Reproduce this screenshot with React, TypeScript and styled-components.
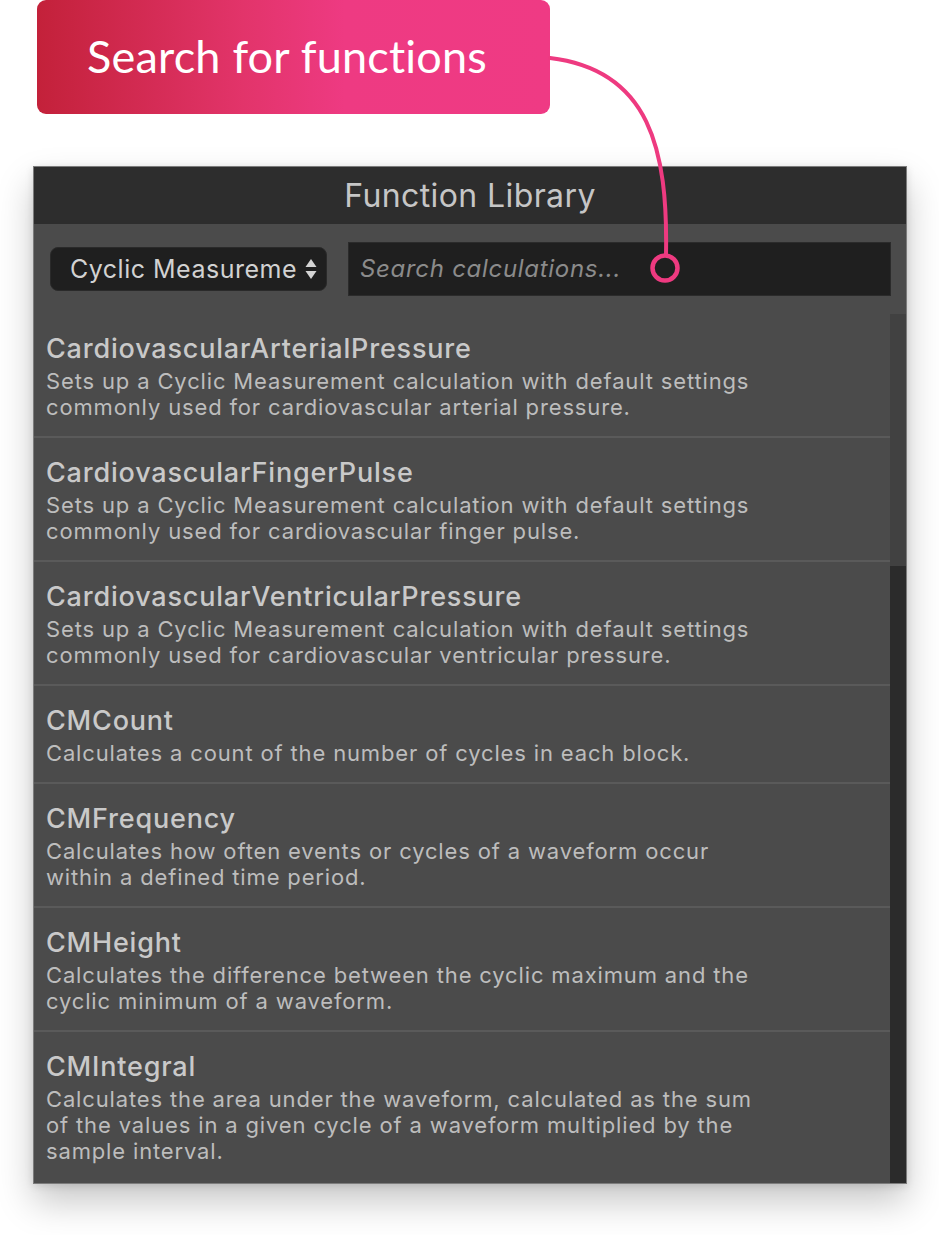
import styled, { createGlobalStyle } from "styled-components";

const GlobalStyle = createGlobalStyle`
  html, body {
    margin: 0;
    padding: 0;
    background: #ffffff;
  }
  * {
    box-sizing: border-box;
  }
`;

const functions = [
  {
    name: "CardiovascularArterialPressure",
    desc: [
      "Sets up a Cyclic Measurement calculation with default settings",
      "commonly used for cardiovascular arterial pressure.",
    ],
  },
  {
    name: "CardiovascularFingerPulse",
    desc: [
      "Sets up a Cyclic Measurement calculation with default settings",
      "commonly used for cardiovascular finger pulse.",
    ],
  },
  {
    name: "CardiovascularVentricularPressure",
    desc: [
      "Sets up a Cyclic Measurement calculation with default settings",
      "commonly used for cardiovascular ventricular pressure.",
    ],
  },
  {
    name: "CMCount",
    desc: ["Calculates a count of the number of cycles in each block."],
  },
  {
    name: "CMFrequency",
    desc: [
      "Calculates how often events or cycles of a waveform occur",
      "within a defined time period.",
    ],
  },
  {
    name: "CMHeight",
    desc: [
      "Calculates the difference between the cyclic maximum and the",
      "cyclic minimum of a waveform.",
    ],
  },
  {
    name: "CMIntegral",
    desc: [
      "Calculates the area under the waveform, calculated as the sum",
      "of the values in a given cycle of a waveform multiplied by the",
      "sample interval.",
    ],
  },
];

const Page = styled.div`
  position: relative;
  width: 939px;
  height: 1235px;
  overflow: hidden;
  padding-left: 33px;
`;

const Callout = styled.div`
  margin-left: 4px;
  width: 513px;
  height: 114px;
  border-radius: 9px;
  background: linear-gradient(90deg, #c3213a 0%, #e2346a 40%, #ee3a82 60%, #ef3a84 100%);
  display: flex;
  align-items: center;
  padding-left: 50px;
  padding-bottom: 2px;
  color: #ffffff;
  font-family: "Lato", "Noto Sans", sans-serif;
  font-size: 45px;
  letter-spacing: 0.2px;
  font-weight: 400;
`;

const Connector = styled.svg`
  position: absolute;
  left: 0;
  top: 0;
  pointer-events: none;
`;

const Panel = styled.div`
  margin-top: 52px;
  width: 874px;
  border: 1px solid #7c7c7c;
  background: #4b4b4b;
  box-shadow: 0 18px 34px rgba(0, 0, 0, 0.22), 0 2px 8px rgba(0, 0, 0, 0.12);
  font-family: "Inter", "Liberation Sans", sans-serif;
`;

const TitleBar = styled.div`
  height: 57px;
  background: #2d2d2d;
  display: flex;
  align-items: center;
  justify-content: center;
  color: #c6c6c6;
  font-size: 32px;
  letter-spacing: 0.4px;
`;

const Toolbar = styled.div`
  height: 90px;
  display: flex;
  align-items: center;
  gap: 21px;
  padding: 0 15px 1px 16px;
`;

const Select = styled.div`
  width: 277px;
  height: 44px;
  border-radius: 8px;
  background: #1f1f1f;
  border: 1px solid #2a2a2a;
  display: flex;
  align-items: center;
  justify-content: space-between;
  padding: 0 8px 0 19px;
  color: #d2d2d2;
  font-size: 25px;
  letter-spacing: 0.5px;
  white-space: nowrap;
  overflow: hidden;
`;

const SearchBox = styled.div`
  flex: 1;
  height: 54px;
  background: #1f1f1f;
  border: 1px solid #2b2b2b;
  display: flex;
  align-items: center;
  padding-left: 11px;
  color: #8b8b8b;
  font-size: 24px;
  letter-spacing: 0.7px;
  font-style: italic;
`;

const ListArea = styled.div`
  display: flex;
  height: 869px;
`;

const List = styled.div`
  flex: 1;
  display: flex;
  flex-direction: column;
`;

const Item = styled.div<{ $last?: boolean }>`
  padding: 20px 12px 16px 12px;
  border-bottom: ${(p) => (p.$last ? "none" : "2px solid #5a5a5a")};
`;

const ItemTitle = styled.div`
  font-size: 27px;
  line-height: 30px;
  font-weight: 500;
  letter-spacing: 0.8px;
  color: #c9c9c9;
  margin-bottom: 4px;
`;

const ItemDesc = styled.div`
  font-size: 22px;
  line-height: 26px;
  letter-spacing: 0.85px;
  color: #bdbdbd;
`;

const ScrollTrack = styled.div`
  width: 16px;
  background: #2b2b2b;
  display: flex;
  flex-direction: column;
`;

const ScrollThumb = styled.div`
  height: 252px;
  background: #414141;
`;

const UpDown = () => (
  <svg width="14" height="24" viewBox="0 0 14 24">
    <path d="M7 2 L12.5 10 H1.5 Z" fill="#d4d4d4" />
    <path d="M7 22 L12.5 14 H1.5 Z" fill="#d4d4d4" />
  </svg>
);

export default function App() {
  return (
    <>
      <GlobalStyle />
      <Page>
        <Callout>Search for functions</Callout>
        <Panel>
          <TitleBar>Function Library</TitleBar>
          <Toolbar>
            <Select>
              <span>Cyclic Measureme</span>
              <UpDown />
            </Select>
            <SearchBox>Search calculations...</SearchBox>
          </Toolbar>
          <ListArea>
            <List>
              {functions.map((f, i) => (
                <Item key={f.name} $last={i === functions.length - 1}>
                  <ItemTitle>{f.name}</ItemTitle>
                  {f.desc.map((line) => (
                    <ItemDesc key={line}>{line}</ItemDesc>
                  ))}
                </Item>
              ))}
            </List>
            <ScrollTrack>
              <ScrollThumb />
            </ScrollTrack>
          </ListArea>
        </Panel>
        <Connector width="939" height="1235" viewBox="0 0 939 1235">
          <path
            d="M550 58 C 650 70, 668 150, 666 255"
            fill="none"
            stroke="#ee3a80"
            strokeWidth="4"
            strokeLinecap="round"
          />
          <circle cx="665" cy="268" r="12.5" fill="none" stroke="#ee3a80" strokeWidth="4.5" />
        </Connector>
      </Page>
    </>
  );
}
